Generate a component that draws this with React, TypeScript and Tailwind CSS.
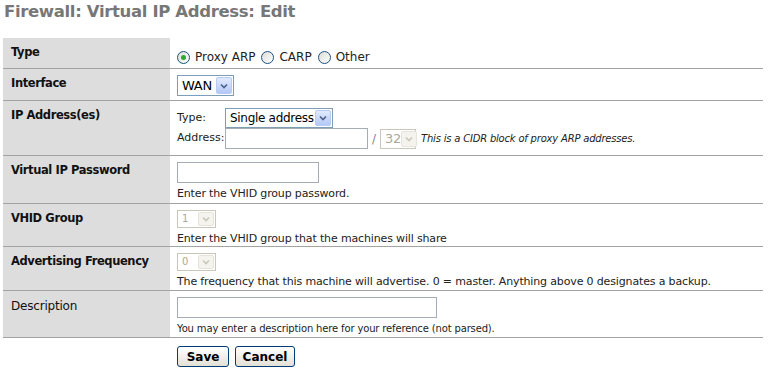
import React from "react";

const FONT = { fontFamily: '"DejaVu Sans", Tahoma, Verdana, sans-serif' };

const Arrow = ({ disabled }: { disabled?: boolean }) => (
  <span
    className={
      "flex h-full w-[16px] shrink-0 items-center justify-center rounded-[2px] border " +
      (disabled ? "border-[#e6e4da] bg-[#f4f3ee]" : "border-[#b8cbf4] bg-gradient-to-b from-[#e1eafe] to-[#b4c8f6]")
    }
  >
    <svg width="8" height="6" viewBox="0 0 8 6">
      <path d="M1 1.5 L4 4.5 L7 1.5" fill="none" stroke={disabled ? "#c9c7ba" : "#4d6185"} strokeWidth="1.6" />
    </svg>
  </span>
);

const Select = ({ value, w, disabled, h = 20, size = "text-[13px]" }: { value: string; w: number; disabled?: boolean; h?: number; size?: string }) => (
  <div
    className={
      "flex items-center justify-between border bg-white p-[1px] " +
      (disabled ? "border-[#c9c7ba] text-[#aca899]" : "border-[#7f9db9] text-black")
    }
    style={{ width: w, height: h }}
  >
    <span className={"whitespace-nowrap pl-[3px] leading-none tracking-[-0.3px] " + size}>{value}</span>
    <Arrow disabled={disabled} />
  </div>
);

const Input = ({ w }: { w: number }) => (
  <div className="h-[21px] border border-[#a5acb5] bg-white" style={{ width: w }} />
);

const Radio = ({ checked, label }: { checked?: boolean; label: string }) => (
  <span className="flex items-center gap-[5px]">
    <span className="flex h-[13px] w-[13px] items-center justify-center rounded-full border border-[#1c5180] bg-gradient-to-br from-[#dcdcd7] to-white">
      {checked && <span className="h-[5px] w-[5px] rounded-full bg-[#2fa92f]" />}
    </span>
    <span className="text-[12px] text-[#222]">{label}</span>
  </span>
);

const Row = ({ label, bold = true, h, children }: { label: string; bold?: boolean; h: number; children: React.ReactNode }) => (
  <div className="grid grid-cols-[167px_1fr] border-b border-[#a3a3a3]" style={{ height: h }}>
    <div
      className={
        "bg-[#dddddd] pl-[8px] pt-[6px] text-[#111] " +
        (bold ? "text-[11.5px] font-bold tracking-[-0.4px]" : "text-[12px] tracking-[-0.2px]")
      }
    >
      {label}
    </div>
    <div className="pl-[7px]">{children}</div>
  </div>
);

const Help = ({ children, small }: { children: React.ReactNode; small?: boolean }) => (
  <div className={(small ? "text-[10px]" : "text-[11px]") + " mt-[4px] leading-[13px] tracking-[-0.15px] text-[#222]"}>{children}</div>
);

export default function App() {
  return (
    <div className="h-[371px] w-[768px] overflow-hidden bg-white" style={FONT}>
      <h1 className="pl-[4px] pt-[1px] text-[16.5px] font-bold leading-[22px] tracking-[-0.35px] text-[#777]">Firewall: Virtual IP Address: Edit</h1>
      <div className="ml-[3px] mt-[15px] w-[760px]">
        <Row label="Type" h={31}>
          <div className="flex items-center gap-[6px] pt-[10px]">
            <Radio checked label="Proxy ARP" />
            <Radio label="CARP" />
            <Radio label="Other" />
          </div>
        </Row>
        <Row label="Interface" h={32}>
          <div className="pt-[6px]">
            <Select value="WAN" w={57} h={21} />
          </div>
        </Row>
        <Row label="IP Address(es)" h={55}>
          <div className="grid grid-cols-[48px_auto] items-center pt-[7px] text-[11px] text-[#222]">
            <span>Type:</span>
            <Select value="Single address" w={108} h={20} size="text-[12px]" />
            <span>Address:</span>
            <div className="flex items-center gap-[4px]">
              <Input w={143} />
              <span className="text-[12px] text-[#888]">/</span>
              <Select value="32" w={36} disabled h={20} />
              <span className="ml-[1px] text-[10px] italic tracking-[-0.2px] text-[#222]">This is a CIDR block of proxy ARP addresses.</span>
            </div>
          </div>
        </Row>
        <Row label="Virtual IP Password" h={48}>
          <div className="pt-[6px]">
            <Input w={142} />
            <Help>Enter the VHID group password.</Help>
          </div>
        </Row>
        <Row label="VHID Group" h={43}>
          <div className="pt-[6px]">
            <Select value="1" w={39} disabled h={18} size="text-[10px]" />
            <Help>Enter the VHID group that the machines will share</Help>
          </div>
        </Row>
        <Row label="Advertising Frequency" h={44}>
          <div className="pt-[6px]">
            <Select value="0" w={39} disabled h={18} size="text-[10px]" />
            <Help>The frequency that this machine will advertise. 0 = master. Anything above 0 designates a backup.</Help>
          </div>
        </Row>
        <Row label="Description" bold={false} h={47}>
          <div className="pt-[6px]">
            <Input w={260} />
            <Help small>You may enter a description here for your reference (not parsed).</Help>
          </div>
        </Row>
        <div className="flex gap-[6px] pl-[174px] pt-[8px]">
          <button className="h-[21px] w-[52px] rounded-[3px] border border-[#003c74] bg-gradient-to-b from-white to-[#e3e1d6] text-[12px] font-bold text-black">Save</button>
          <button className="h-[21px] w-[60px] rounded-[3px] border border-[#003c74] bg-gradient-to-b from-white to-[#e3e1d6] text-[12px] font-bold text-black">Cancel</button>
        </div>
      </div>
    </div>
  );
}
